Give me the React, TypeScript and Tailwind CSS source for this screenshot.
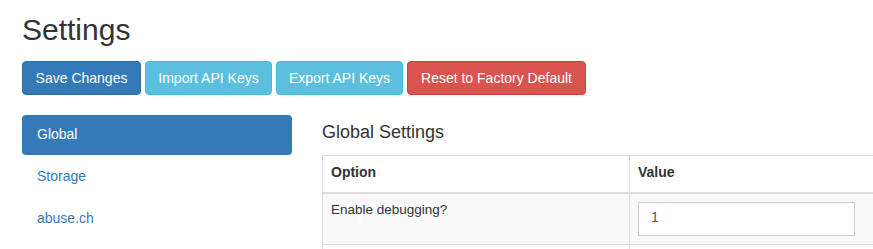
import React from "react";

export default function App() {
  const btn =
    "inline-block h-[34px] px-0 rounded-[4px] border text-[14px] leading-[20px] text-white text-center whitespace-nowrap";
  return (
    <div
      className="w-full overflow-hidden bg-white text-[#333] text-[14px] leading-[20px] pl-[22px]"
      style={{ fontFamily: '"Liberation Sans", Arial, sans-serif' }}
    >
      <h1 className="text-[30px] leading-[33px] mt-[13px] mb-[15px] font-normal">Settings</h1>
      <div className="flex gap-[4px]">
        <button className={`${btn} w-[119px] bg-[#337ab7] border-[#2e6da4]`}>Save Changes</button>
        <button className={`${btn} w-[127px] bg-[#5bc0de] border-[#46b8da]`}>Import API Keys</button>
        <button className={`${btn} w-[127px] bg-[#5bc0de] border-[#46b8da]`}>Export API Keys</button>
        <button className={`${btn} w-[179px] bg-[#d9534f] border-[#d43f3a]`}>Reset to Factory Default</button>
      </div>
      <div className="flex mt-[20px] gap-[30px]">
        <div className="w-[270px] shrink-0 flex flex-col gap-[2px]">
          <div className="h-[40px] px-[15px] pt-[9px] pb-[11px] rounded-[4px] bg-[#337ab7] text-white">Global</div>
          <div className="h-[40px] px-[15px] pt-[9px] pb-[11px] text-[#337ab7]">Storage</div>
          <div className="h-[40px] px-[15px] pt-[9px] pb-[11px] text-[#337ab7]">abuse.ch</div>
        </div>
        <div className="shrink-0">
          <h4 className="text-[18px] leading-[20px] mt-[7px] mb-[13px] font-normal">Global Settings</h4>
          <table className="border-collapse w-[560px] border border-[#ddd]">
            <thead>
              <tr>
                <th className="text-left font-bold w-[307px] px-[8px] pt-[6px] pb-[10px] border border-[#ddd] border-b-2 align-top">
                  Option
                </th>
                <th className="text-left font-bold px-[8px] pt-[6px] pb-[10px] border border-[#ddd] border-b-2 align-top">
                  Value
                </th>
              </tr>
            </thead>
            <tbody>
              <tr className="bg-[#f9f9f9]">
                <td className="px-[8px] pt-[6px] pb-[8px] border border-[#ddd] align-top text-[13.5px]">
                  Enable debugging?
                </td>
                <td className="p-[8px] border border-[#ddd] align-top">
                  <input
                    readOnly
                    value="1"
                    className="block w-[217px] h-[34px] px-[12px] pt-[4px] pb-[8px] border border-[#ccc] rounded-none bg-white text-[#555] text-[14px] leading-[20px] outline-none"
                    style={{ fontFamily: '"Liberation Sans", Arial, sans-serif' }}
                  />
                </td>
              </tr>
              <tr>
                <td className="p-[8px] border border-[#ddd] h-[50px]"></td>
                <td className="p-[8px] border border-[#ddd] h-[50px]"></td>
              </tr>
            </tbody>
          </table>
        </div>
      </div>
    </div>
  );
}
